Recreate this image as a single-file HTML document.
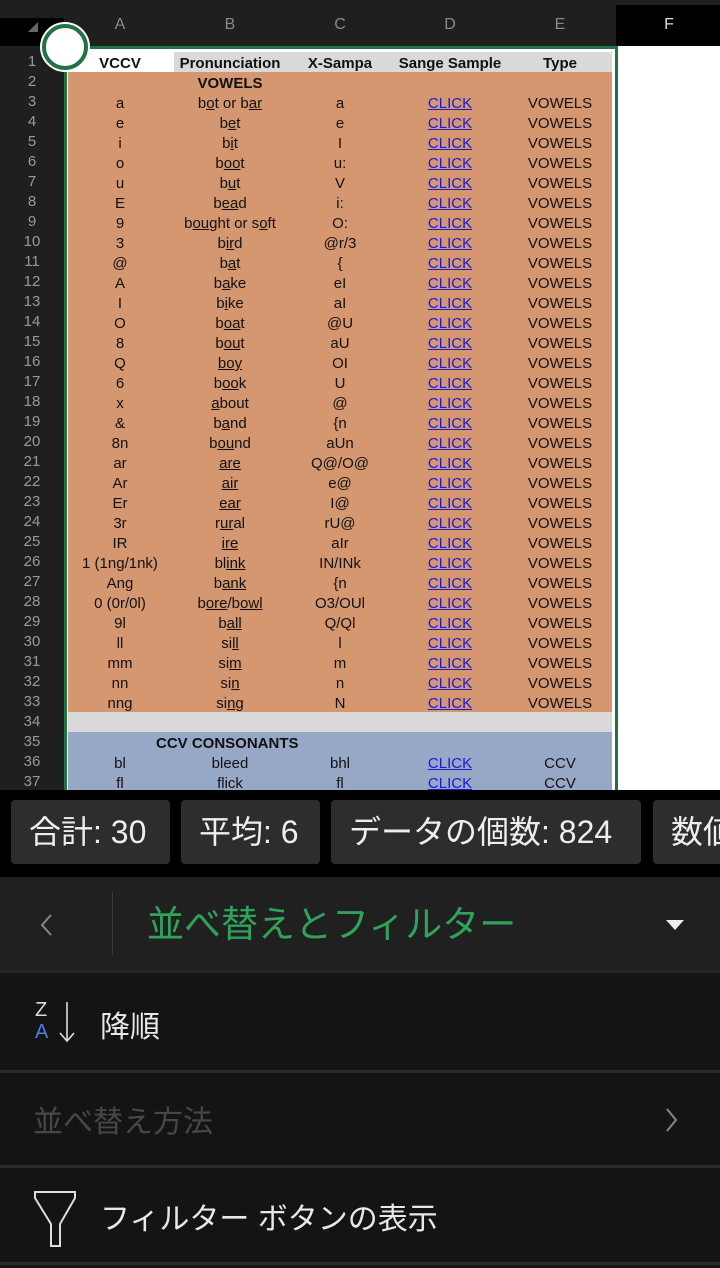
<!DOCTYPE html>
<html><head><meta charset="utf-8"><style>
*{margin:0;padding:0;box-sizing:border-box}
body{width:720px;height:1268px;background:#141414;position:relative;overflow:hidden;font-family:"Liberation Sans","Noto Sans CJK JP",sans-serif}
.abs{position:absolute}
#grid{position:absolute;left:0;top:0;width:720px;height:790px;background:#1f1f1f}
.rn{position:absolute;left:0;width:64px;text-align:center;color:#9a9a9a;font-size:15px;height:20px;line-height:20px}
.row{position:absolute;left:68px;width:544px;height:20px;line-height:20px;font-size:15px;color:#111}
.c{position:absolute;top:2px;width:110px;text-align:center;white-space:nowrap}
.ch{position:absolute;top:16px;color:#8a8a8a;font-size:16px;width:110px;text-align:center}
u{text-decoration:underline}
.lk{color:#1a1ad8;text-decoration:underline}
.chip{position:absolute;top:800px;height:64px;background:#2d2d2d;border-radius:4px;color:#eee;font-size:32px;line-height:64px;padding-left:18px;white-space:nowrap;overflow:hidden}
.item{position:absolute;left:0;width:720px;background:#141414}
.sep{position:absolute;left:0;width:720px;height:3px;background:#2a2a2a}
</style></head><body>
<div id="grid">
<div class="abs" style="left:0;top:18px;width:64px;height:28px;background:#000"></div>
<div class="abs" style="left:616px;top:5px;width:104px;height:41px;background:#000"></div>
<svg class="abs" style="left:26px;top:20px" width="14" height="14"><polygon points="12,2 12,12 2,12" fill="#666"/></svg>
<div class="ch" style="left:65px">A</div><div class="ch" style="left:175px">B</div><div class="ch" style="left:285px">C</div><div class="ch" style="left:395px">D</div><div class="ch" style="left:505px">E</div>
<div class="ch" style="left:614px;color:#ddd">F</div>
<div class="abs" style="left:618px;top:46px;width:102px;height:744px;background:#fff"></div>
<div class="abs" style="left:64px;top:46px;width:554px;height:744px;background:#fff;border:3px solid #217346;border-bottom:none"></div>
<div id="rows"></div>
<div class="abs" style="left:42px;top:24px;width:46px;height:46px;border-radius:50%;background:#fff;border:4px solid #217346;box-shadow:0 0 0 2px #fff"></div>
</div>
<div class="abs" style="left:0;top:790px;width:720px;height:87px;background:#000"></div>
<div class="chip" style="left:11px;width:159px">合計: 30</div>
<div class="chip" style="left:181px;width:139px">平均: 6</div>
<div class="chip" style="left:331px;width:310px">データの個数: 824</div>
<div class="chip" style="left:653px;width:80px">数値</div>
<div class="abs" style="left:0;top:877px;width:720px;height:93px;background:#202020"></div>
<svg class="abs" style="left:38px;top:912px" width="18" height="26"><polyline points="13,3 4,13 13,23" fill="none" stroke="#888" stroke-width="2"/></svg>
<div class="abs" style="left:112px;top:892px;width:1px;height:63px;background:#3a3a3a"></div>
<div class="abs" style="left:147px;top:900px;font-size:37px;color:#2fa35a;line-height:50px">並べ替えとフィルター</div>
<svg class="abs" style="left:665px;top:918px" width="20" height="14"><polygon points="1,2 19,2 10,12" fill="#eee"/></svg>
<div class="sep" style="top:970px;background:#262626"></div>
<div class="item" style="top:977px;height:93px"></div>
<div class="sep" style="top:1070px"></div>
<div class="item" style="top:1073px;height:92px"></div>
<div class="sep" style="top:1165px"></div>
<div class="item" style="top:1168px;height:94px"></div>
<div class="sep" style="top:1262px"></div>
<div class="abs" style="left:35px;top:1000px;font-size:20px;color:#ddd;line-height:20px">Z</div>
<div class="abs" style="left:35px;top:1022px;font-size:20px;color:#4a7fe0;line-height:20px">A</div>
<svg class="abs" style="left:56px;top:1000px" width="22" height="44"><line x1="11" y1="2" x2="11" y2="40" stroke="#ddd" stroke-width="1.6"/><polyline points="4,33 11,41 18,33" fill="none" stroke="#ddd" stroke-width="1.6"/></svg>
<div class="abs" style="left:100px;top:1006px;font-size:30px;color:#e8e8e8;line-height:44px">降順</div>
<div class="abs" style="left:33px;top:1101px;font-size:30px;color:#474747;line-height:44px">並べ替え方法</div>
<svg class="abs" style="left:664px;top:1106px" width="16" height="28"><polyline points="3,3 12,14 3,25" fill="none" stroke="#888" stroke-width="2"/></svg>
<svg class="abs" style="left:33px;top:1190px" width="46" height="60"><path d="M2,2 H42 V8 L27,34 V56 H18 V34 L2,8 Z" fill="none" stroke="#ddd" stroke-width="2"/></svg>
<div class="abs" style="left:100px;top:1198px;font-size:30px;color:#e8e8e8;line-height:44px">フィルター ボタンの表示</div>
<script>
(function(){
var d=[["a","b<u>o</u>t or b<u>ar</u>","a"],["e","b<u>e</u>t","e"],["i","b<u>i</u>t","I"],["o","b<u>oo</u>t","u:"],["u","b<u>u</u>t","V"],["E","b<u>ea</u>d","i:"],["9","b<u>ou</u>ght or s<u>o</u>ft","O:"],["3","b<u>ir</u>d","@r/3"],["@","b<u>a</u>t","{"],["A","b<u>a</u>ke","eI"],["I","b<u>i</u>ke","aI"],["O","b<u>oa</u>t","@U"],["8","b<u>ou</u>t","aU"],["Q","<u>boy</u>","OI"],["6","b<u>oo</u>k","U"],["x","<u>a</u>bout","@"],["&amp;","b<u>a</u>nd","{n"],["8n","b<u>ou</u>nd","aUn"],["ar","<u>are</u>","Q@/O@"],["Ar","<u>air</u>","e@"],["Er","<u>ear</u>","I@"],["3r","r<u>ur</u>al","rU@"],["IR","<u>ire</u>","aIr"],["1 (1ng/1nk)","bl<u>ink</u>","IN/INk"],["Ang","b<u>ank</u>","{n"],["0 (0r/0l)","b<u>ore</u>/b<u>owl</u>","O3/OUl"],["9l","b<u>all</u>","Q/Ql"],["ll","si<u>ll</u>","l"],["mm","si<u>m</u>","m"],["nn","si<u>n</u>","n"],["nng","si<u>ng</u>","N"]];
var h="";
function ty(n){return 52+20*(n-1);}
function cells(arr){var s="";for(var i=0;i<arr.length;i++){if(arr[i]!==null)s+='<div class="c" style="left:'+(i*110-3)+'px">'+arr[i]+'</div>';}return s;}
for(var n=1;n<=37;n++)h+='<div class="rn" style="top:'+ty(n)+'px">'+n+'</div>';
function row(n,bg,arr,extra){return '<div class="row" style="top:'+ty(n)+'px;background:'+bg+';'+(extra||'')+'">'+cells(arr)+'</div>';}
h+='<div class="row" style="top:52px;background:#d9d9d9;font-weight:bold"><div class="abs" style="left:0;top:0;width:106px;height:20px;background:#fff"></div>'+cells(["VCCV","Pronunciation","X-Sampa","Sange Sample","Type"])+'</div>';
h+=row(2,"#d4976f",[null,"VOWELS"],"font-weight:bold");
for(var i=0;i<d.length;i++)h+=row(i+3,"#d4976f",[d[i][0],d[i][1],d[i][2],'<span class="lk">CLICK</span>',"VOWELS"]);
h+='<div class="row" style="top:'+ty(34)+'px;background:#d9d9d9"></div>';
h+='<div class="row" style="top:'+ty(35)+'px;background:#97a8c6;font-weight:bold"><div class="abs" style="left:88px;top:2px">CCV CONSONANTS</div></div>';
h+=row(36,"#97a8c6",["bl","bleed","bhl",'<span class="lk">CLICK</span>',"CCV"]);
h+=row(37,"#97a8c6",["fl","flick","fl",'<span class="lk">CLICK</span>',"CCV"],"height:18px;overflow:hidden");
document.getElementById("rows").innerHTML=h;
})();
</script>
</body></html>
